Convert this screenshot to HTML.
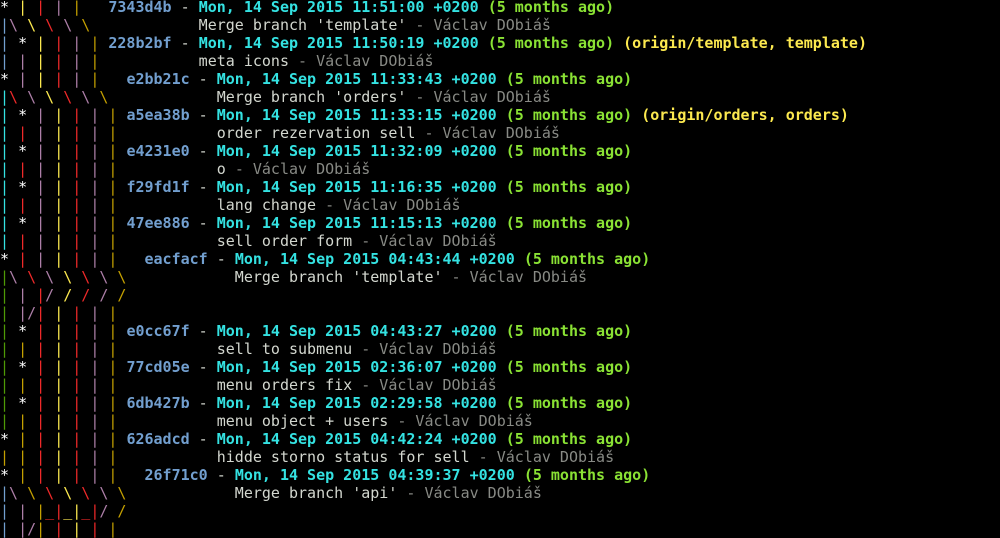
<!DOCTYPE html>
<html><head><meta charset="utf-8"><style>
html,body{margin:0;padding:0;background:#000;width:1000px;height:528px;overflow:hidden}
pre{margin:0;position:absolute;left:0;top:-2px;font-family:"DejaVu Sans Mono","Liberation Mono",monospace;font-size:15px;line-height:18px;color:#d3d7cf;letter-spacing:0}
.h{color:#729fcf;font-weight:bold}.d{color:#34e2e2;font-weight:bold}.a{color:#8ae234;font-weight:bold}.f{color:#fce94f;font-weight:bold}
.n{color:#888a85}.w{color:#fff}
.r{color:#ef2929}.y{color:#fce94f}.o{color:#c4a000}.b{color:#729fcf}.m{color:#ad7fa8}.g{color:#8ae234}.c{color:#34e2e2}.G{color:#4e9a06}
</style></head><body><pre><span class="w">*</span> <span class="y">|</span> <span class="r">|</span> <span class="m">|</span> <span class="o">|</span>   <span class="h">7343d4b</span> - <span class="d">Mon, 14 Sep 2015 11:51:00 +0200</span> <span class="a">(5 months ago)</span>
<span class="b">|</span><span class="m">\</span> <span class="y">\</span> <span class="r">\</span> <span class="m">\</span> <span class="o">\</span>            Merge branch 'template' <span class="n">- Václav DObiáš</span>
<span class="b">|</span> <span class="w">*</span> <span class="y">|</span> <span class="r">|</span> <span class="m">|</span> <span class="o">|</span> <span class="h">228b2bf</span> - <span class="d">Mon, 14 Sep 2015 11:50:19 +0200</span> <span class="a">(5 months ago)</span> <span class="f">(origin/template, template)</span>
<span class="b">|</span> <span class="m">|</span> <span class="y">|</span> <span class="r">|</span> <span class="m">|</span> <span class="o">|</span>           meta icons <span class="n">- Václav DObiáš</span>
<span class="w">*</span> <span class="m">|</span> <span class="y">|</span> <span class="r">|</span> <span class="m">|</span> <span class="o">|</span>   <span class="h">e2bb21c</span> - <span class="d">Mon, 14 Sep 2015 11:33:43 +0200</span> <span class="a">(5 months ago)</span>
<span class="c">|</span><span class="r">\</span> <span class="m">\</span> <span class="y">\</span> <span class="r">\</span> <span class="m">\</span> <span class="o">\</span>            Merge branch 'orders' <span class="n">- Václav DObiáš</span>
<span class="c">|</span> <span class="w">*</span> <span class="m">|</span> <span class="y">|</span> <span class="r">|</span> <span class="m">|</span> <span class="o">|</span> <span class="h">a5ea38b</span> - <span class="d">Mon, 14 Sep 2015 11:33:15 +0200</span> <span class="a">(5 months ago)</span> <span class="f">(origin/orders, orders)</span>
<span class="c">|</span> <span class="r">|</span> <span class="m">|</span> <span class="y">|</span> <span class="r">|</span> <span class="m">|</span> <span class="o">|</span>           order rezervation sell <span class="n">- Václav DObiáš</span>
<span class="c">|</span> <span class="w">*</span> <span class="m">|</span> <span class="y">|</span> <span class="r">|</span> <span class="m">|</span> <span class="o">|</span> <span class="h">e4231e0</span> - <span class="d">Mon, 14 Sep 2015 11:32:09 +0200</span> <span class="a">(5 months ago)</span>
<span class="c">|</span> <span class="r">|</span> <span class="m">|</span> <span class="y">|</span> <span class="r">|</span> <span class="m">|</span> <span class="o">|</span>           o <span class="n">- Václav DObiáš</span>
<span class="c">|</span> <span class="w">*</span> <span class="m">|</span> <span class="y">|</span> <span class="r">|</span> <span class="m">|</span> <span class="o">|</span> <span class="h">f29fd1f</span> - <span class="d">Mon, 14 Sep 2015 11:16:35 +0200</span> <span class="a">(5 months ago)</span>
<span class="c">|</span> <span class="r">|</span> <span class="m">|</span> <span class="y">|</span> <span class="r">|</span> <span class="m">|</span> <span class="o">|</span>           lang change <span class="n">- Václav DObiáš</span>
<span class="c">|</span> <span class="w">*</span> <span class="m">|</span> <span class="y">|</span> <span class="r">|</span> <span class="m">|</span> <span class="o">|</span> <span class="h">47ee886</span> - <span class="d">Mon, 14 Sep 2015 11:15:13 +0200</span> <span class="a">(5 months ago)</span>
<span class="c">|</span> <span class="r">|</span> <span class="m">|</span> <span class="y">|</span> <span class="r">|</span> <span class="m">|</span> <span class="o">|</span>           sell order form <span class="n">- Václav DObiáš</span>
<span class="w">*</span> <span class="r">|</span> <span class="m">|</span> <span class="y">|</span> <span class="r">|</span> <span class="m">|</span> <span class="o">|</span>   <span class="h">eacfacf</span> - <span class="d">Mon, 14 Sep 2015 04:43:44 +0200</span> <span class="a">(5 months ago)</span>
<span class="G">|</span><span class="m">\</span> <span class="r">\</span> <span class="m">\</span> <span class="y">\</span> <span class="r">\</span> <span class="m">\</span> <span class="o">\</span>            Merge branch 'template' <span class="n">- Václav DObiáš</span>
<span class="G">|</span> <span class="m">|</span> <span class="r">|</span><span class="m">/</span> <span class="y">/</span> <span class="r">/</span> <span class="m">/</span> <span class="o">/</span>
<span class="G">|</span> <span class="m">|</span><span class="m">/</span><span class="r">|</span> <span class="y">|</span> <span class="r">|</span> <span class="m">|</span> <span class="o">|</span>
<span class="G">|</span> <span class="w">*</span> <span class="r">|</span> <span class="y">|</span> <span class="r">|</span> <span class="m">|</span> <span class="o">|</span> <span class="h">e0cc67f</span> - <span class="d">Mon, 14 Sep 2015 04:43:27 +0200</span> <span class="a">(5 months ago)</span>
<span class="G">|</span> <span class="o">|</span> <span class="r">|</span> <span class="y">|</span> <span class="r">|</span> <span class="m">|</span> <span class="o">|</span>           sell to submenu <span class="n">- Václav DObiáš</span>
<span class="G">|</span> <span class="w">*</span> <span class="r">|</span> <span class="y">|</span> <span class="r">|</span> <span class="m">|</span> <span class="o">|</span> <span class="h">77cd05e</span> - <span class="d">Mon, 14 Sep 2015 02:36:07 +0200</span> <span class="a">(5 months ago)</span>
<span class="G">|</span> <span class="o">|</span> <span class="r">|</span> <span class="y">|</span> <span class="r">|</span> <span class="m">|</span> <span class="o">|</span>           menu orders fix <span class="n">- Václav DObiáš</span>
<span class="G">|</span> <span class="w">*</span> <span class="r">|</span> <span class="y">|</span> <span class="r">|</span> <span class="m">|</span> <span class="o">|</span> <span class="h">6db427b</span> - <span class="d">Mon, 14 Sep 2015 02:29:58 +0200</span> <span class="a">(5 months ago)</span>
<span class="G">|</span> <span class="o">|</span> <span class="r">|</span> <span class="y">|</span> <span class="r">|</span> <span class="m">|</span> <span class="o">|</span>           menu object + users <span class="n">- Václav DObiáš</span>
<span class="w">*</span> <span class="o">|</span> <span class="r">|</span> <span class="y">|</span> <span class="r">|</span> <span class="m">|</span> <span class="o">|</span> <span class="h">626adcd</span> - <span class="d">Mon, 14 Sep 2015 04:42:24 +0200</span> <span class="a">(5 months ago)</span>
<span class="o">|</span> <span class="o">|</span> <span class="r">|</span> <span class="y">|</span> <span class="r">|</span> <span class="m">|</span> <span class="o">|</span>           hidde storno status for sell <span class="n">- Václav DObiáš</span>
<span class="w">*</span> <span class="o">|</span> <span class="r">|</span> <span class="y">|</span> <span class="r">|</span> <span class="m">|</span> <span class="o">|</span>   <span class="h">26f71c0</span> - <span class="d">Mon, 14 Sep 2015 04:39:37 +0200</span> <span class="a">(5 months ago)</span>
<span class="b">|</span><span class="m">\</span> <span class="o">\</span> <span class="r">\</span> <span class="y">\</span> <span class="r">\</span> <span class="m">\</span> <span class="o">\</span>            Merge branch 'api' <span class="n">- Václav DObiáš</span>
<span class="b">|</span> <span class="m">|</span> <span class="o">|</span><span class="r">_</span><span class="r">|</span><span class="y">_</span><span class="y">|</span><span class="r">_</span><span class="r">|</span><span class="m">/</span> <span class="o">/</span>
<span class="b">|</span> <span class="m">|</span><span class="m">/</span><span class="o">|</span> <span class="r">|</span> <span class="y">|</span> <span class="r">|</span> <span class="o">|</span></pre></body></html>
